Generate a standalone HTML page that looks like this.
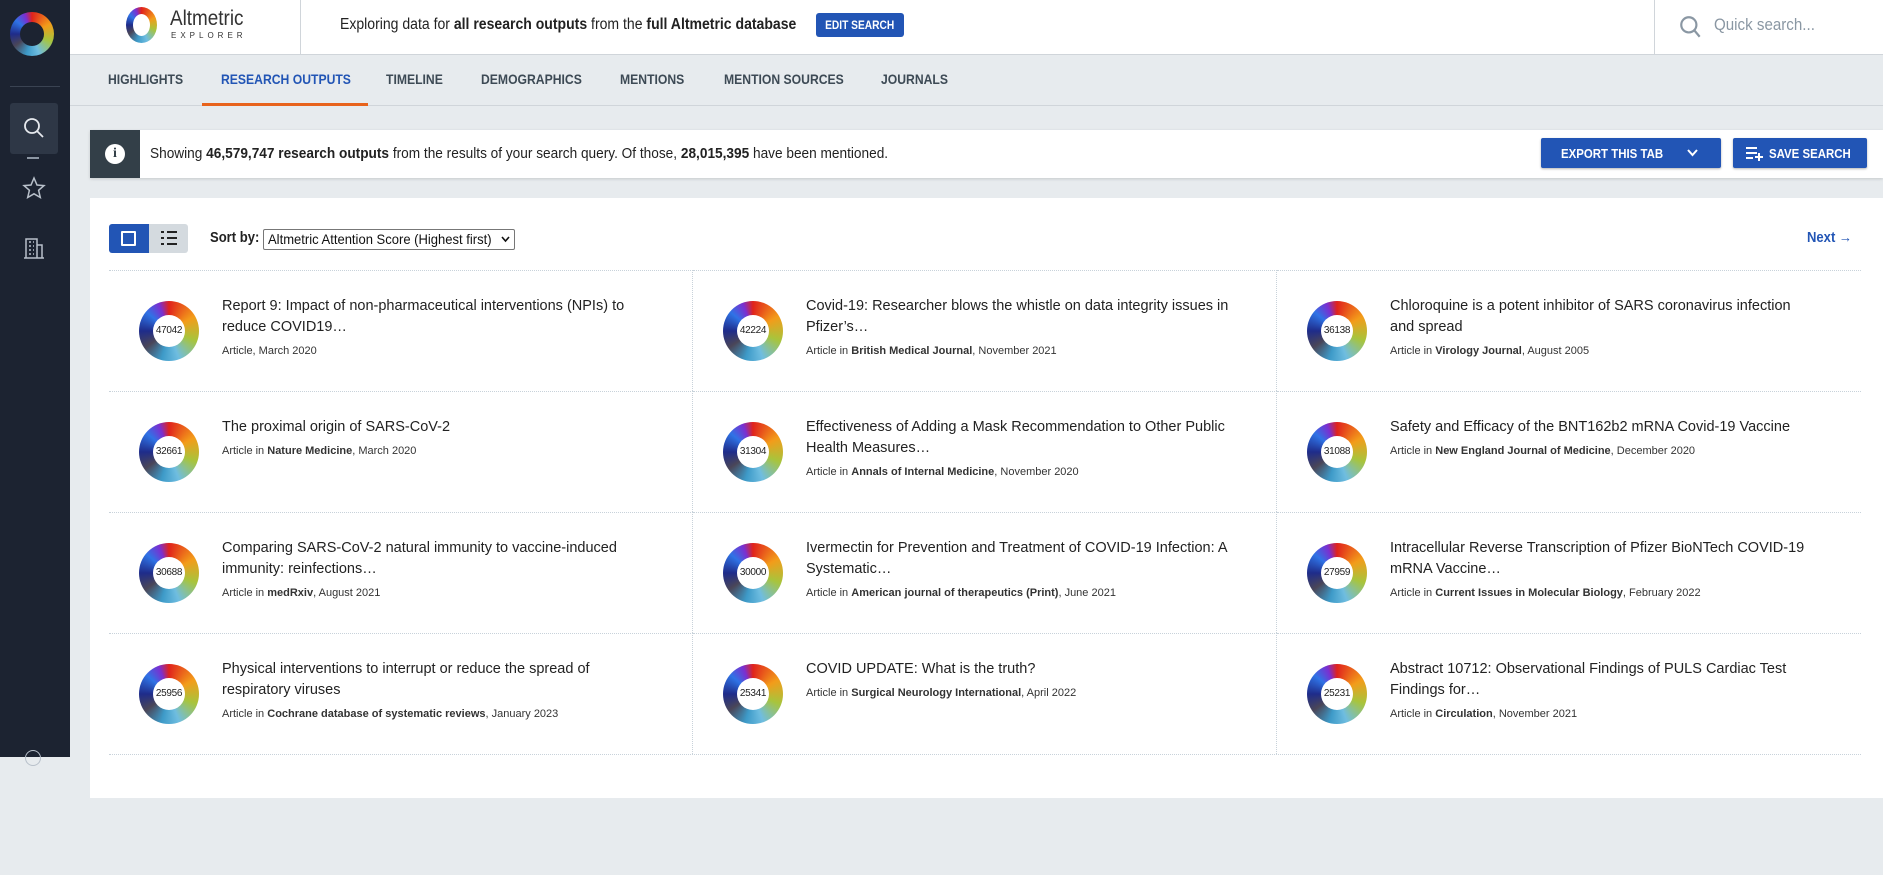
<!DOCTYPE html>
<html><head><meta charset="utf-8"><style>
*{box-sizing:border-box;margin:0;padding:0}
body{width:1883px;height:757px;overflow:hidden;background:#e7ebee;font-family:"Liberation Sans",Arial,sans-serif;position:relative}
.sx{display:inline-block;transform-origin:0 50%;white-space:nowrap}
#side{position:absolute;left:0;top:0;width:70px;height:757px;background:#1c2331}
#hdr{position:absolute;left:70px;top:0;right:0;height:55px;background:#fff;border-bottom:1px solid #d0d5da}
#nav{position:absolute;left:70px;top:55px;right:0;height:51px;border-bottom:1px solid #d0d5da}
#nav span{position:absolute;top:16px;font-size:14px;font-weight:bold;color:#3d4a55;transform:scaleX(.87);transform-origin:0 50%;white-space:nowrap}
.btn{position:absolute;background:#2255b5;color:#fff;font-weight:bold;font-size:13px;border-radius:2px;display:flex;align-items:center;box-shadow:0 1px 2px rgba(0,0,0,.3);white-space:nowrap}
#info{position:absolute;left:90px;top:130px;right:0;height:48px;background:#fff;box-shadow:0 1px 3px rgba(0,0,0,.15)}
#card{position:absolute;left:90px;top:198px;right:0;height:600px;background:#fff}
.badge{position:absolute;width:60px;height:60px;border-radius:50%;background:conic-gradient(from 0deg,#e0231c,#f39c1a 60deg,#a8c43c 110deg,#6fbde0 160deg,#3d9ac8 195deg,#4a4658 235deg,#1f2c8a 270deg,#2f73e6 310deg,#7b2fd0 340deg,#e0231c)}
.badge b{position:absolute;left:14px;top:14px;width:32px;height:32px;border-radius:50%;background:#fff;font-size:10px;font-weight:normal;color:#222;text-align:center;line-height:32px;letter-spacing:-.3px}
.cell{position:absolute;width:584px;height:121px;border-top:1px dotted #c8d2da}
.cell.r{border-right:1px dotted #c8d2da}
.t{position:absolute;top:25px;font-size:14.5px;line-height:21px;color:#222;width:425px}
.s{font-size:11px;line-height:16px;color:#333;margin-top:5px}
</style></head><body>
<div id="side">
 <div style="position:absolute;left:10px;top:12px;width:44px;height:44px;border-radius:50%;background:conic-gradient(from 0deg,#e0231c,#f39c1a 60deg,#a8c43c 110deg,#6fbde0 160deg,#3d9ac8 195deg,#4a4658 235deg,#1f2c8a 270deg,#2f73e6 310deg,#7b2fd0 340deg,#e0231c)"><div style="position:absolute;left:10px;top:10px;width:24px;height:24px;border-radius:50%;background:#1c2331"></div></div>
 <div style="position:absolute;left:10px;top:86px;width:50px;height:1px;background:#3a4352"></div>
 <div style="position:absolute;left:10px;top:103px;width:48px;height:51px;background:#2e3746;border-radius:3px"></div>
 <svg style="position:absolute;left:22px;top:116px" width="24" height="24" viewBox="0 0 24 24" fill="none" stroke="#e6e9ee" stroke-width="1.8"><circle cx="10" cy="10" r="7"/><path d="M15 15l6 6"/></svg>
 <div style="position:absolute;left:27px;top:157px;width:12px;height:2px;background:#8c96a3"></div>
 <svg style="position:absolute;left:22px;top:176px" width="24" height="24" viewBox="0 0 24 24" fill="none" stroke="#b8c0ca" stroke-width="1.5"><path d="M12 2l3 7 7 .6-5.4 4.7 1.7 7.2L12 17.8 5.7 21.5l1.7-7.2L2 9.6 9 9z"/></svg>
 <svg style="position:absolute;left:22px;top:236px" width="24" height="24" viewBox="0 0 24 24" fill="none" stroke="#b8c0ca" stroke-width="1.5"><path d="M4 22V3h11v19M15 9h5v13M2 22h20M7 6h2M11 6h1M7 10h2M11 10h1M7 14h2M11 14h1M7 18h2M11 18h1"/></svg>
 <div style="position:absolute;left:25px;top:750px;width:16px;height:16px;border-radius:50%;border:1.5px solid #b8c0ca"></div>
</div>
<div id="hdr">
 <div style="position:absolute;left:56px;top:7px;width:31px;height:36px;border-radius:50%;background:conic-gradient(from 0deg,#e0231c,#f39c1a 60deg,#a8c43c 110deg,#6fbde0 160deg,#3d9ac8 195deg,#4a4658 235deg,#1f2c8a 270deg,#2f73e6 310deg,#7b2fd0 340deg,#e0231c)"><div style="position:absolute;left:7px;top:7px;width:17px;height:22px;border-radius:50%;background:#fff"></div></div>
 <div style="position:absolute;left:100px;top:7px;font-size:21px;color:#333"><span class="sx" style="transform:scaleX(.9)">Altmetric</span></div>
 <div style="position:absolute;left:101px;top:31px;font-size:8px;letter-spacing:4px;color:#333">EXPLORER</div>
 <div style="position:absolute;left:230px;top:0;width:1px;height:55px;background:#d0d5da"></div>
 <div style="position:absolute;left:270px;top:16px;font-size:15.5px;color:#222"><span class="sx" style="transform:scaleX(.905)">Exploring data for <b>all research outputs</b> from the <b>full Altmetric database</b></span></div>
 <div class="btn" style="left:746px;top:13px;width:88px;height:24px;justify-content:center;font-size:12px;border-radius:3px;box-shadow:none"><span class="sx" style="transform:scaleX(.85);transform-origin:50% 50%">EDIT SEARCH</span></div>
 <div style="position:absolute;left:1584px;top:0;width:1px;height:55px;background:#d0d5da"></div>
 <svg style="position:absolute;left:1608px;top:14px" width="26" height="26" viewBox="0 0 24 24" fill="none" stroke="#8a97a3" stroke-width="2"><circle cx="10" cy="10" r="7"/><path d="M15 15l5 6"/></svg>
 <div style="position:absolute;left:1644px;top:15px;font-size:17px;color:#8a97a3"><span class="sx" style="transform:scaleX(.89)">Quick search...</span></div>
</div>
<div id="nav">
 <span style="left:38px">HIGHLIGHTS</span>
 <span style="left:151px;color:#2255b5">RESEARCH OUTPUTS</span>
 <span style="left:316px">TIMELINE</span>
 <span style="left:411px">DEMOGRAPHICS</span>
 <span style="left:550px">MENTIONS</span>
 <span style="left:654px">MENTION SOURCES</span>
 <span style="left:811px">JOURNALS</span>
 <div style="position:absolute;left:132px;top:48px;width:166px;height:3px;background:#e8631c"></div>
</div>
<div id="info">
 <div style="position:absolute;left:0;top:0;width:50px;height:48px;background:#333f48"></div>
 <div style="position:absolute;left:15px;top:14px;width:20px;height:20px;border-radius:50%;background:#fff;color:#333f48;font-weight:bold;font-size:14px;text-align:center;line-height:20px;font-family:'Liberation Serif',serif">i</div>
 <div style="position:absolute;left:60px;top:15px;font-size:15px;color:#222"><span class="sx" style="transform:scaleX(.91)">Showing <b>46,579,747 research outputs</b> from the results of your search query. Of those, <b>28,015,395</b> have been mentioned.</span></div>
 <div class="btn" style="left:1451px;top:8px;width:180px;height:30px;padding-left:20px;font-size:13px"><span class="sx" style="transform:scaleX(.88)">EXPORT THIS TAB</span><svg style="position:absolute;right:23px;top:11px" width="11" height="8" viewBox="0 0 11 8" fill="none" stroke="#fff" stroke-width="2"><path d="M1 1l4.5 5L10 1"/></svg></div>
 <div class="btn" style="left:1643px;top:8px;width:134px;height:30px;padding-left:12px;font-size:13px"><svg width="20" height="16" viewBox="0 0 20 16" stroke="#fff" stroke-width="2"><path d="M1 3h11M1 8h11M1 13h7M14 8v8M10 12h8"/></svg>&nbsp;<span class="sx" style="transform:scaleX(.88)">SAVE SEARCH</span></div>
</div>
<div id="card">
 <div style="position:absolute;left:19px;top:26px;width:40px;height:29px;background:#2255b5;border-radius:3px 0 0 3px"></div>
 <div style="position:absolute;left:31px;top:33px;width:15px;height:15px;border:2px solid #fff;border-radius:1px"></div>
 <div style="position:absolute;left:59px;top:26px;width:39px;height:29px;background:#d4dadf;border-radius:0 3px 3px 0"></div>
 <svg style="position:absolute;left:70px;top:32px" width="18" height="16" viewBox="0 0 18 16" stroke="#222" stroke-width="2"><path d="M1 2h3M7 2h10M1 8h3M7 8h10M1 14h3M7 14h10"/></svg>
 <div style="position:absolute;left:120px;top:32px;font-size:14.5px;font-weight:bold;color:#222"><span class="sx" style="transform:scaleX(.9)">Sort by:</span></div>
 <div style="position:absolute;left:173px;top:31px;width:252px;height:21px;border:1px solid #777;border-radius:2px;font-size:14px;padding:1px 4px;color:#111;white-space:nowrap;overflow:hidden"><span class="sx" style="transform:scaleX(.93)">Altmetric Attention Score (Highest first)</span><svg style="position:absolute;right:4px;top:6px" width="9" height="7" viewBox="0 0 9 7" fill="none" stroke="#111" stroke-width="1.6"><path d="M1 1l3.5 4L8 1"/></svg></div>
 <div style="position:absolute;left:1717px;top:32px;font-size:14.5px;font-weight:bold;color:#2255b5"><span class="sx" style="transform:scaleX(.9)">Next &#8594;</span></div>
 <div style="position:absolute;left:19px;top:72px">
  <div class="cell r" style="left:0;top:0"><div class="badge" style="left:30px;top:30px"><b>47042</b></div><div class="t" style="left:113px">Report 9: Impact of non-pharmaceutical interventions (NPIs) to reduce COVID19…<div class="s">Article, March 2020</div></div></div>
  <div class="cell r" style="left:584px;top:0"><div class="badge" style="left:30px;top:30px"><b>42224</b></div><div class="t" style="left:113px">Covid-19: Researcher blows the whistle on data integrity issues in Pfizer’s…<div class="s">Article in <b>British Medical Journal</b>, November 2021</div></div></div>
  <div class="cell" style="left:1168px;top:0"><div class="badge" style="left:30px;top:30px"><b>36138</b></div><div class="t" style="left:113px">Chloroquine is a potent inhibitor of SARS coronavirus infection and spread<div class="s">Article in <b>Virology Journal</b>, August 2005</div></div></div>
  <div class="cell r" style="left:0;top:121px"><div class="badge" style="left:30px;top:30px"><b>32661</b></div><div class="t" style="left:113px">The proximal origin of SARS-CoV-2<div class="s">Article in <b>Nature Medicine</b>, March 2020</div></div></div>
  <div class="cell r" style="left:584px;top:121px"><div class="badge" style="left:30px;top:30px"><b>31304</b></div><div class="t" style="left:113px">Effectiveness of Adding a Mask Recommendation to Other Public Health Measures…<div class="s">Article in <b>Annals of Internal Medicine</b>, November 2020</div></div></div>
  <div class="cell" style="left:1168px;top:121px"><div class="badge" style="left:30px;top:30px"><b>31088</b></div><div class="t" style="left:113px">Safety and Efficacy of the BNT162b2 mRNA Covid-19 Vaccine<div class="s">Article in <b>New England Journal of Medicine</b>, December 2020</div></div></div>
  <div class="cell r" style="left:0;top:242px"><div class="badge" style="left:30px;top:30px"><b>30688</b></div><div class="t" style="left:113px">Comparing SARS-CoV-2 natural immunity to vaccine-induced immunity: reinfections…<div class="s">Article in <b>medRxiv</b>, August 2021</div></div></div>
  <div class="cell r" style="left:584px;top:242px"><div class="badge" style="left:30px;top:30px"><b>30000</b></div><div class="t" style="left:113px">Ivermectin for Prevention and Treatment of COVID-19 Infection: A Systematic…<div class="s">Article in <b>American journal of therapeutics (Print)</b>, June 2021</div></div></div>
  <div class="cell" style="left:1168px;top:242px"><div class="badge" style="left:30px;top:30px"><b>27959</b></div><div class="t" style="left:113px">Intracellular Reverse Transcription of Pfizer BioNTech COVID-19 mRNA Vaccine…<div class="s">Article in <b>Current Issues in Molecular Biology</b>, February 2022</div></div></div>
  <div class="cell r" style="left:0;top:363px"><div class="badge" style="left:30px;top:30px"><b>25956</b></div><div class="t" style="left:113px">Physical interventions to interrupt or reduce the spread of respiratory viruses<div class="s">Article in <b>Cochrane database of systematic reviews</b>, January 2023</div></div></div>
  <div class="cell r" style="left:584px;top:363px"><div class="badge" style="left:30px;top:30px"><b>25341</b></div><div class="t" style="left:113px">COVID UPDATE: What is the truth?<div class="s">Article in <b>Surgical Neurology International</b>, April 2022</div></div></div>
  <div class="cell" style="left:1168px;top:363px"><div class="badge" style="left:30px;top:30px"><b>25231</b></div><div class="t" style="left:113px">Abstract 10712: Observational Findings of PULS Cardiac Test Findings for…<div class="s">Article in <b>Circulation</b>, November 2021</div></div></div>
  <div class="cell" style="left:0;top:484px;width:1752px"></div>
 </div>
</div>
</body></html>
